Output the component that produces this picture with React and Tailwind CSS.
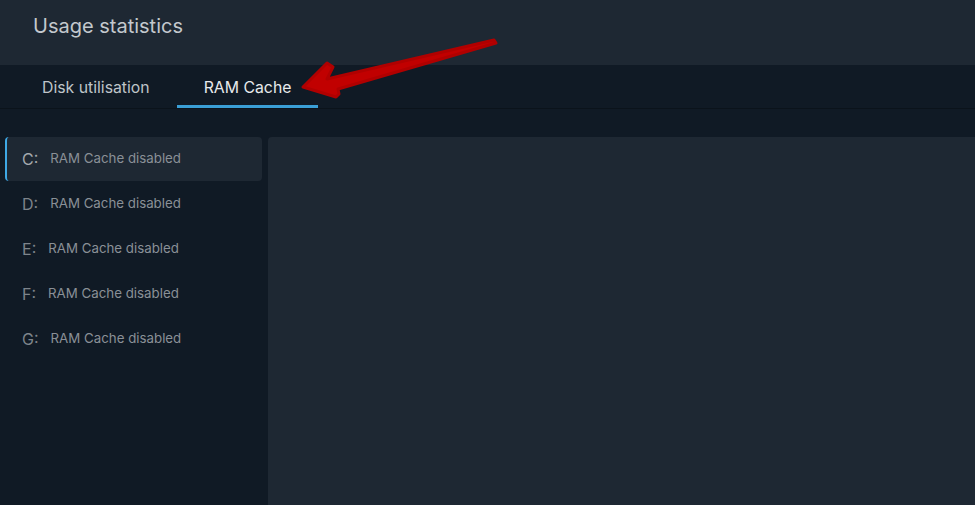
import React from "react";

const drives = ["C", "D", "E", "F", "G"];

function Arrow() {
  return (
    <svg
      className="absolute left-0 top-0 pointer-events-none"
      width="975"
      height="120"
      viewBox="0 0 975 120"
    >
      <polygon
        points="303,87 327,63 333,67 327,79 494,40 496,43 338,89 339,94 336,97"
        fill="#c10000"
        stroke="#b00000"
        strokeWidth="3"
        strokeLinejoin="round"
      />
    </svg>
  );
}

export default function App() {
  const [tab, setTab] = React.useState("ram");
  const [selected, setSelected] = React.useState("C");

  return (
    <div
      className="relative w-[975px] h-[505px] overflow-hidden bg-[#101a25] flex flex-col"
      style={{ fontFamily: "Inter, 'Noto Sans', sans-serif" }}
    >
      {/* Header */}
      <div className="h-[65px] shrink-0 bg-[#1e2833] px-[33px] pt-[12px]">
        <h1 className="text-[20px] text-[#c3c8cd] leading-[28px]">Usage statistics</h1>
      </div>

      {/* Tabs */}
      <div className="h-[44px] shrink-0 flex pl-[15px] border-b border-[#0b131b]">
        <button
          onClick={() => setTab("disk")}
          className={`px-[27px] pt-[5px] text-[15.8px] border-b-[3px] ${
            tab === "disk" ? "border-[#3a9fd6] text-[#e8eaec]" : "border-transparent text-[#bfc4c9]"
          }`}
        >
          Disk utilisation
        </button>
        <button
          onClick={() => setTab("ram")}
          className={`px-[27px] pt-[5px] text-[15.8px] border-b-[3px] ${
            tab === "ram" ? "border-[#3a9fd6] text-[#e8eaec]" : "border-transparent text-[#bfc4c9]"
          }`}
        >
          RAM Cache
        </button>
      </div>

      {/* Body */}
      <div className="flex flex-1 pt-[28px] pl-[5px] gap-[6px]">
        <div className="w-[257px] shrink-0 flex flex-col gap-px">
          {drives.map((d) => (
            <button
              key={d}
              onClick={() => setSelected(d)}
              className={`h-[44px] flex items-center gap-[12px] pl-[15px] rounded-[4px] border-l-2 text-left ${
                selected === d ? "bg-[#1e2833] border-[#3fa9e6]" : "border-transparent"
              }`}
            >
              <span
                className={`text-[16px] ${
                  selected === d ? "text-[#a3a9ae]" : "text-[#7d848b]"
                }`}
              >
                {d}:
              </span>
              <span className="text-[13.3px] text-[#8a9097]">RAM Cache disabled</span>
            </button>
          ))}
        </div>
        <div className="flex-1 bg-[#1e2833] rounded-tl-[4px]" />
      </div>

      <Arrow />
    </div>
  );
}
